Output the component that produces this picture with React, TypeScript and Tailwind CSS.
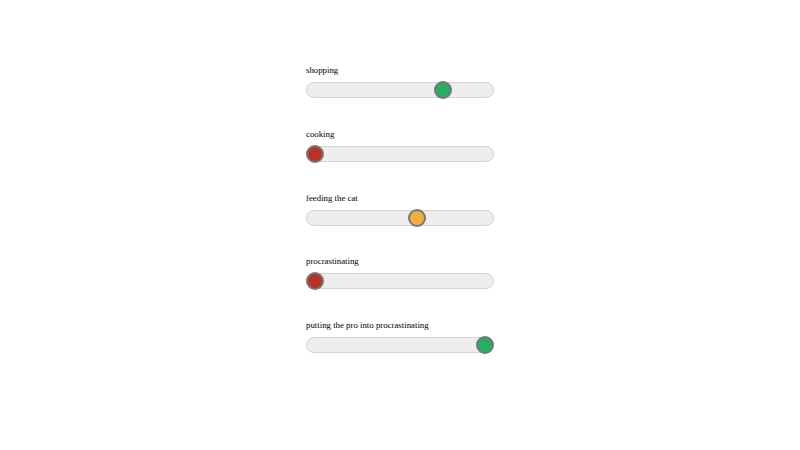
import React from "react";

const items = [
  { label: "shopping", value: 0.753, color: "bg-[#27ae60]" },
  { label: "cooking", value: 0, color: "bg-[#b83227]" },
  { label: "feeding the cat", value: 0.6, color: "bg-[#f2ae3a]" },
  { label: "procrastinating", value: 0, color: "bg-[#b83227]" },
  { label: "putting the pro into procrastinating", value: 1, color: "bg-[#27ae60]" },
];

export default function App() {
  return (
    <div className="w-[800px] h-[450px] bg-white flex justify-center" style={{ fontFamily: '"Liberation Serif", serif' }}>
      <div className="w-[188px] pt-[64px] flex flex-col gap-[29.75px]">
        {items.map((it) => (
          <div key={it.label} className="flex flex-col">
            <div className="text-[8.8px] leading-[12px] text-black h-[12px]">{it.label}</div>
            <div className="mt-[6px] relative h-[16px] rounded-full border border-[#d4d4d4] bg-[#eeeeee]">
              <div
                className={`absolute top-[-2px] w-[18px] h-[18px] rounded-full border-2 border-[#777777] ${it.color}`}
                style={{ left: `${-1 + it.value * 170}px` }}
              />
            </div>
          </div>
        ))}
      </div>
    </div>
  );
}
